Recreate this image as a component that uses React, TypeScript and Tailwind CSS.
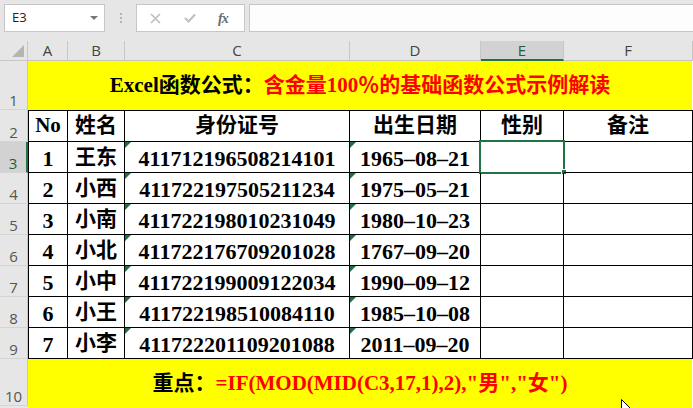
const people = [
  ["1", "王东", "411712196508214101", "1965–08–21"],
  ["2", "小西", "411722197505211234", "1975–05–21"],
  ["3", "小南", "411722198010231049", "1980–10–23"],
  ["4", "小北", "411722176709201028", "1767–09–20"],
  ["5", "小中", "411722199009122034", "1990–09–12"],
  ["6", "小王", "411722198510084110", "1985–10–08"],
  ["7", "小李", "411722201109201088", "2011–09–20"],
];

const cols = [
  { key: "A", w: "w-[40px]" },
  { key: "B", w: "w-[57px]" },
  { key: "C", w: "w-[225px]" },
  { key: "D", w: "w-[131px]" },
  { key: "E", w: "w-[83px]" },
  { key: "F", w: "w-[129px]" },
];

const cellFont = "font-['Liberation_Serif','Noto_Sans_CJK_SC',serif] font-bold";
const uiFont = "font-['Open_Sans','Noto_Sans',sans-serif]";

function RowHead({ n, h, active }: { n: number; h: string; active?: boolean }) {
  return (
    <div
      className={`${h} w-[28px] shrink-0 flex items-end justify-center pb-[1px] text-[15px] leading-none border-b border-[#d4d4d4] ${uiFont} ${
        active
          ? "bg-[#d2d2d2] text-[#1f5d3d] border-r-2 border-r-[#217346]"
          : "bg-[#e6e6e6] text-[#555] border-r border-r-[#c6c6c6]"
      }`}
    >
      {n}
    </div>
  );
}

function Flag() {
  return (
    <span className="absolute left-0 top-0 w-0 h-0 border-t-[6px] border-r-[6px] border-t-[#1e7145] border-r-transparent" />
  );
}

export default function App() {
  return (
    <div className="relative w-[693px] h-[408px] overflow-hidden bg-[#e6e6e6]">
      {/* formula bar */}
      <div className="h-[41px] pt-[4px] flex items-start">
        <div className={`ml-[4px] w-[101px] h-[28px] bg-white border border-[#c6c6c6] flex items-center justify-between px-[7px] text-[13px] text-[#222] ${uiFont}`}>
          <span>E3</span>
          <span className="w-0 h-0 border-l-[4px] border-r-[4px] border-t-[4px] border-l-transparent border-r-transparent border-t-[#777] mr-[-1px]" />
        </div>
        <div className="w-[31px] h-[28px] flex flex-col items-center justify-center gap-[2px]">
          <span className="w-[2px] h-[2px] bg-[#b4b4b4]" />
          <span className="w-[2px] h-[2px] bg-[#b4b4b4]" />
          <span className="w-[2px] h-[2px] bg-[#b4b4b4]" />
        </div>
        <div className="w-[109px] h-[28px] bg-white border border-[#c6c6c6] flex items-center">
          <svg className="ml-[13px]" width="11" height="11" viewBox="0 0 11 11">
            <path d="M1 1 L10 10 M10 1 L1 10" stroke="#bdbdbd" strokeWidth="1.6" />
          </svg>
          <svg className="ml-[23px]" width="12" height="10" viewBox="0 0 12 10">
            <path d="M1 5 L4.5 8.5 L11 1.5" stroke="#c0c0c0" strokeWidth="2.2" fill="none" />
          </svg>
          <span className="ml-[22px] text-[14px] italic font-bold text-[#6b6b6b] font-['Liberation_Serif',serif] tracking-[-1px]">
            fx
          </span>
        </div>
        <div className="ml-[4px] flex-1 h-[28px] bg-[#fdfdfd] border-y border-l border-[#c6c6c6]" />
      </div>

      {/* column headers */}
      <div className={`flex h-[20px] ${uiFont} text-[15px] text-[#444]`}>
        <div className="relative w-[28px] h-[20px] border-r border-b border-[#c6c6c6]">
          <span className="absolute right-[3px] bottom-[3px] w-0 h-0 border-b-[12px] border-l-[12px] border-b-[#b4b4b4] border-l-transparent" />
        </div>
        {cols.map((c) =>
          c.key === "E" ? (
            <div
              key={c.key}
              className={`${c.w} h-[20px] flex items-center justify-center bg-[#d2d2d2] text-[#1f5d3d] border-r border-r-[#c6c6c6] border-b-2 border-b-[#217346]`}
            >
              {c.key}
            </div>
          ) : (
            <div
              key={c.key}
              className={`${c.w} h-[20px] flex items-center justify-center border-r border-b border-[#c6c6c6]`}
            >
              {c.key}
            </div>
          )
        )}
      </div>

      {/* row 1: title */}
      <div className="flex">
        <RowHead n={1} h="h-[49px]" />
        <div className={`w-[664px] h-[49px] bg-[#ffff00] flex items-center justify-center text-[21px] ${cellFont}`}>
          <span className="text-black">Excel函数公式：</span>
          <span className="text-[#ff0000]">含金量100％的基础函数公式示例解读</span>
        </div>
        <div className="w-[1px] h-[49px] bg-white" />
      </div>

      {/* row 2: headings */}
      <div className="flex">
        <RowHead n={2} h="h-[32px]" />
        <div className={`flex bg-white text-[21px] text-black ${cellFont}`}>
          {["No", "姓名", "身份证号", "出生日期", "性别", "备注"].map((t, i) => (
            <div
              key={t}
              className={`${cols[i].w} h-[32px] flex items-center justify-center border-t border-r border-b border-black ${
                i === 0 ? "border-l" : ""
              }`}
            >
              {t}
            </div>
          ))}
        </div>
        <div className="w-[1px] h-[32px] bg-white" />
      </div>

      {/* data rows */}
      {people.map((p, r) => (
        <div key={p[0]} className="flex">
          <RowHead n={r + 3} h="h-[31px]" active={r === 0} />
          <div className={`flex bg-white text-[22px] text-black ${cellFont}`}>
            {[p[0], p[1], p[2], p[3], "", ""].map((t, i) => (
              <div
                key={i}
                className={`relative ${cols[i].w} h-[31px] flex items-center justify-center pt-[2px] border-r border-b border-black ${
                  i === 0 ? "border-l" : ""
                } ${i === 1 ? "text-[21px]" : ""}`}
              >
                {(i === 2 || i === 3) && <Flag />}
                {t}
                {i === 4 && r === 0 && (
                  <>
                    <span className="absolute left-[-2px] top-[-2px] w-[86px] h-[34px] border-2 border-[#217346]" />
                    <span className="absolute right-[-4px] bottom-[-3px] w-[6px] h-[6px] bg-[#217346] border border-white" />
                  </>
                )}
              </div>
            ))}
          </div>
          <div className="w-[1px] h-[31px] bg-white" />
        </div>
      ))}

      {/* row 10: key formula */}
      <div className="flex">
        <RowHead n={10} h="h-[47px]" />
        <div className={`w-[664px] h-[49px] bg-[#ffff00] flex items-center justify-center text-[21px] ${cellFont}`}>
          <span className="text-black">重点：</span>
          <span className="text-[#ff0000]">=IF(MOD(MID(C3,17,1),2),"男","女")</span>
        </div>
        <div className="w-[1px] h-[49px] bg-white" />
      </div>

      {/* mouse pointer */}
      <svg className="absolute left-[621px] top-[399px]" width="13" height="20" viewBox="0 0 13 20">
        <path d="M0.5 0.5 L0.5 16 L4.2 12.4 L6.8 18.5 L9 17.5 L6.5 11.5 L11.5 11.5 Z" fill="white" stroke="black" strokeWidth="1" />
      </svg>
    </div>
  );
}
